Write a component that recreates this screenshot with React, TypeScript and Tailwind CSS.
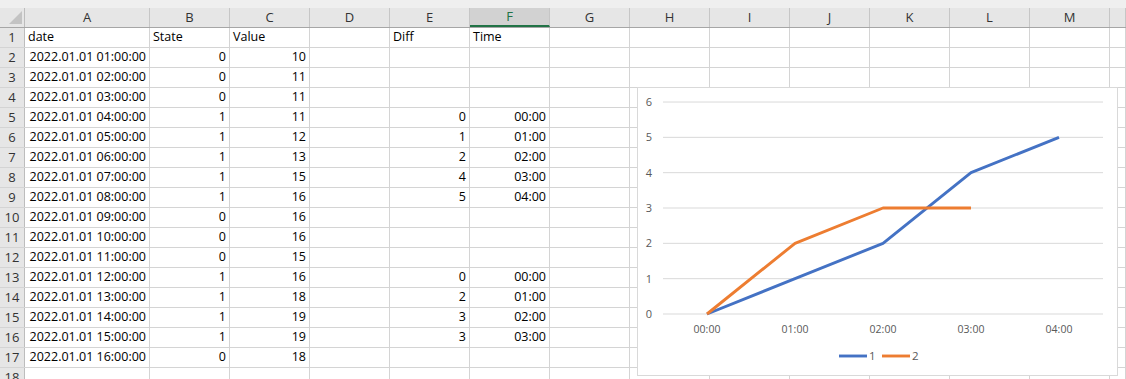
import React from "react";

// spreadsheet columns after the row-number gutter
const COLS = ["A", "B", "C", "D", "E", "F", "G", "H", "I", "J", "K", "L", "M", "N"];

type Row = { a?: string; b?: string; c?: string; e?: string; f?: string; head?: boolean };

const ROWS: Row[] = [
  { a: "date", b: "State", c: "Value", e: "Diff", f: "Time", head: true },
  { a: "2022.01.01 01:00:00", b: "0", c: "10" },
  { a: "2022.01.01 02:00:00", b: "0", c: "11" },
  { a: "2022.01.01 03:00:00", b: "0", c: "11" },
  { a: "2022.01.01 04:00:00", b: "1", c: "11", e: "0", f: "00:00" },
  { a: "2022.01.01 05:00:00", b: "1", c: "12", e: "1", f: "01:00" },
  { a: "2022.01.01 06:00:00", b: "1", c: "13", e: "2", f: "02:00" },
  { a: "2022.01.01 07:00:00", b: "1", c: "15", e: "4", f: "03:00" },
  { a: "2022.01.01 08:00:00", b: "1", c: "16", e: "5", f: "04:00" },
  { a: "2022.01.01 09:00:00", b: "0", c: "16" },
  { a: "2022.01.01 10:00:00", b: "0", c: "16" },
  { a: "2022.01.01 11:00:00", b: "0", c: "15" },
  { a: "2022.01.01 12:00:00", b: "1", c: "16", e: "0", f: "00:00" },
  { a: "2022.01.01 13:00:00", b: "1", c: "18", e: "2", f: "01:00" },
  { a: "2022.01.01 14:00:00", b: "1", c: "19", e: "3", f: "02:00" },
  { a: "2022.01.01 15:00:00", b: "1", c: "19", e: "3", f: "03:00" },
  { a: "2022.01.01 16:00:00", b: "0", c: "18" },
  {},
];

function colWidth(c: string) {
  if (c === "A") return "w-[125px]";
  if (c === "N") return "flex-1";
  return "w-[80px] shrink-0";
}

function Cell({ col, text, right }: { col: string; text?: string; right?: boolean }) {
  return (
    <div
      className={`${colWidth(col)} h-full border-r border-[#d4d4d4] flex items-center overflow-hidden whitespace-nowrap ${
        right ? "justify-end pr-[3px]" : "pl-[3px]"
      }`}
    >
      {text}
    </div>
  );
}

function LineChart() {
  const y = (v: number) => 226 - v * 35.33;
  const x = (i: number) => 69 + i * 88;
  const s1 = [0, 1, 2, 4, 5];
  const s2 = [0, 2, 3, 3];
  const pts = (s: number[]) => s.map((v, i) => `${x(i)},${y(v)}`).join(" ");
  return (
    <div className="absolute left-[637px] top-[87px] w-[481px] h-[289px] border border-[#d9d9d9] bg-white">
      <svg width="479" height="287" className="block">
        {[0, 1, 2, 3, 4, 5, 6].map((v) => (
          <g key={v}>
            <line x1="25" x2="465" y1={y(v)} y2={y(v)} stroke="#d9d9d9" strokeWidth="1" />
            <text x="14" y={y(v) + 4} textAnchor="end" fontSize="11" fill="#595959">
              {v}
            </text>
          </g>
        ))}
        {["00:00", "01:00", "02:00", "03:00", "04:00"].map((t, i) => (
          <text key={t} x={x(i)} y="245" textAnchor="middle" fontSize="10.5" fill="#595959">
            {t}
          </text>
        ))}
        <polyline points={pts(s1)} fill="none" stroke="#4472c4" strokeWidth="2.9" strokeLinejoin="round" />
        <polyline points={pts(s2)} fill="none" stroke="#ed7d31" strokeWidth="2.9" strokeLinejoin="round" />
        <line x1="201" x2="229" y1="268" y2="268" stroke="#4472c4" strokeWidth="2.9" />
        <text x="231" y="272" fontSize="11.5" fill="#595959">1</text>
        <line x1="244" x2="272" y1="268" y2="268" stroke="#ed7d31" strokeWidth="2.9" />
        <text x="274" y="272" fontSize="11.5" fill="#595959">2</text>
      </svg>
    </div>
  );
}

export default function App() {
  return (
    <div
      className="relative w-[1126px] h-[379px] overflow-hidden bg-white text-[12.5px] text-black"
      style={{ fontFamily: '"Open Sans", "Noto Sans", sans-serif' }}
    >
      <div className="h-[8px] bg-[#efefef]" />
      {/* column letters */}
      <div className="flex h-[20px] bg-[#e6e6e6] border-b border-[#a6a6a6] text-[#333] text-[13px]">
        <div className="w-[25px] shrink-0 h-full border-r border-[#bdbdbd] relative">
          <svg width="24" height="19" className="absolute left-0 top-0">
            <polygon points="22,3 22,16 9,16" fill="#c3c3c3" />
          </svg>
        </div>
        {COLS.map((c) => (
          <div
            key={c}
            className={`${colWidth(c)} h-full flex items-center justify-center border-r border-[#c6c6c6] ${
              c === "F" ? "bg-[#d2d2d2] text-[#217346] border-b-2 border-b-[#217346]" : ""
            }`}
          >
            {c !== "N" ? c : ""}
          </div>
        ))}
      </div>
      {/* rows */}
      {ROWS.map((r, i) => (
        <div key={i} className="flex h-[20px] border-b border-[#d4d4d4]">
          <div className="w-[25px] shrink-0 h-full bg-[#e6e6e6] border-r border-[#bdbdbd] flex items-center justify-center text-[#333] text-[13px]">
            {i + 1}
          </div>
          <Cell col="A" text={r.a} right={!r.head} />
          <Cell col="B" text={r.b} right={!r.head} />
          <Cell col="C" text={r.c} right={!r.head} />
          <Cell col="D" />
          <Cell col="E" text={r.e} right={!r.head} />
          <Cell col="F" text={r.f} right={!r.head} />
          {COLS.slice(6).map((c) => (
            <Cell key={c} col={c} />
          ))}
        </div>
      ))}
      <LineChart />
    </div>
  );
}
